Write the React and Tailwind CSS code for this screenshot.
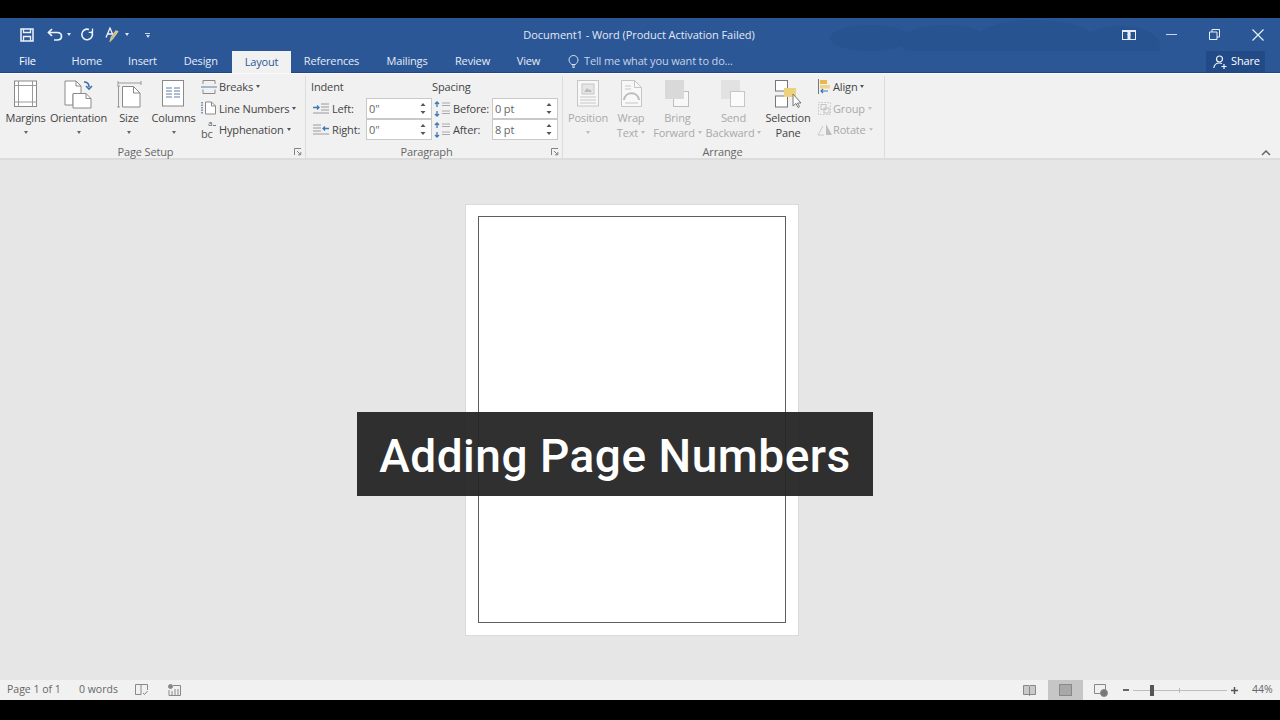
const tabs = [
  ["Home", "w-[57.5px]"],
  ["Insert", "w-[54px]"],
  ["Design", "w-[62.5px]"],
];
const tabs2 = [
  ["References", "w-[81px]"],
  ["Mailings", "w-[70px]"],
  ["Review", "w-[61px]"],
  ["View", "w-[51px]"],
];

function Caret({ className = "" }) {
  return <span className={"inline-block w-0 h-0 border-l-[2.5px] border-r-[2.5px] border-t-[3px] border-l-transparent border-r-transparent border-t-current " + className} />;
}

function Launcher() {
  return (
    <svg width="8" height="8" viewBox="0 0 8 8" className="absolute right-[3px] bottom-[2px]" fill="none" stroke="#777" strokeWidth="0.9">
      <path d="M7 .5H.5V7" />
      <path d="M3 3l3.5 3.5M6.8 4v2.8H4" />
    </svg>
  );
}

function Big({ w, icon, l1, l2, caret, muted }) {
  return (
    <div className={"flex flex-col items-center shrink-0 pt-[4px] " + w + (muted ? " text-[#a9a9a9]" : " text-[#444]")}>
      <div className="h-[30px] flex items-start justify-center">{icon}</div>
      <div className="leading-[15px] whitespace-nowrap h-[15px]">{l1}</div>
      {l2 ? (
        <div className="leading-[15px] whitespace-nowrap flex items-center gap-[3px] justify-center">
          {l2}
          {caret && <Caret className="text-[#bbb]" />}
        </div>
      ) : (
        <div className="h-[14px] flex items-center justify-center"><Caret className={muted ? "text-[#bbb]" : "text-[#666]"} /></div>
      )}
    </div>
  );
}

function Small({ icon, label, muted, iw = "w-[18px]" }) {
  return (
    <div className={"h-[21.5px] flex items-center whitespace-nowrap " + (muted ? "text-[#a9a9a9]" : "text-[#444]")}>
      <span className={"flex justify-start shrink-0 " + iw}>{icon}</span>
      <span>{label}</span>
      <Caret className={"ml-[3px] " + (muted ? "text-[#c4c4c4]" : "text-[#555]")} />
    </div>
  );
}

function Spinner({ value }) {
  return (
    <div className="w-[66px] h-[21px] bg-white border border-[#c9c9c9] flex items-center justify-between pl-[2px] pr-[5px] text-[#666]">
      <span>{value}</span>
      <svg width="6" height="13" viewBox="0 0 6 13" fill="#555">
        <path d="M3 1l2.5 3H.5zM3 12L.5 9h5z" />
      </svg>
    </div>
  );
}

const S = { stroke: "#8a8a8a", strokeWidth: 1, fill: "none" };

const IconMargins = (
  <svg width="24" height="28" viewBox="0 0 24 28" {...S}>
    <rect x=".5" y="1" width="22" height="25.5" fill="#fff" />
    <path d="M4.5 1v25.5M18.5 1v25.5M.5 5.5h22M.5 22h22" stroke="#9a9a9a" />
  </svg>
);
const IconOrientation = (
  <svg width="30" height="30" viewBox="0 0 30 30" {...S}>
    <path d="M1 1h11l5 5v8H9v11H1z" fill="#fff" />
    <path d="M12 1v5h5" />
    <path d="M9 13.500h13l5 5V28H9z" fill="#fff" />
    <path d="M22 13.500v5h5" />
    <path d="M20 2c3 0 5 1 5 5" stroke="#3f6ea8" strokeWidth="1.6" />
    <path d="M22 6l3 3 3-3" stroke="#3f6ea8" strokeWidth="1.6" />
  </svg>
);
const IconSize = (
  <svg width="25" height="29" viewBox="0 0 25 29" {...S}>
    <path d="M1 3h23M1 1v4M24 1v4M1.500 6v21M0 6h3M0 27h3" stroke="#999" />
    <path d="M5.500 6.500h11l6.500 6.500v14H5.500z" fill="#fff" />
    <path d="M16.500 6.500V13H23" />
  </svg>
);
const IconColumns = (
  <svg width="23" height="27" viewBox="0 0 23 27" {...S}>
    <rect x=".5" y=".5" width="21" height="25.500" fill="#fff" />
    <path d="M4 8h6M12 8h6M4 11h6M12 11h6M4 14h6M12 14h6M4 17h6M12 17h6" stroke="#5d7ea8" />
  </svg>
);
const IconBreaks = (
  <svg width="16" height="14" viewBox="0 0 16 14" {...S}>
    <path d="M2 .5h12M2 .5v3.500M14 .5v3.500M2 13.500v-4M14 13.500v-4M2 13.500h12" />
    <path d="M0 7h16" stroke="#5d7ea8" />
  </svg>
);
const IconLines = (
  <svg width="16" height="14" viewBox="0 0 16 14" {...S}>
    <path d="M1 1v12" stroke="#5d7ea8" strokeDasharray="1.500 1" strokeWidth="1.500" />
    <path d="M4.500 1h6l4 4v8h-10z" fill="#fff" />
    <path d="M10.500 1v4h4" />
  </svg>
);
const IconHyphen = (
  <span className="relative block w-[16px] h-[14px] text-[#555] leading-none">
    <span className="absolute left-0 bottom-[-2px] text-[11px]">bc</span>
    <span className="absolute left-[7px] top-[-4px] text-[8px]">a</span>
    <span className="absolute left-[12px] top-[2px] block w-[3px] h-[1px] bg-[#5d7ea8]" />
  </span>
);
const IconIndentL = (
  <svg width="16" height="11" viewBox="0 0 16 11" fill="none" strokeWidth="1">
    <path d="M8 1h8M8 4h8M8 7h8M0 10h16" stroke="#9a9a9a" />
    <path d="M0 4.500h6M4 2.500l2 2-2 2" stroke="#3b78b8" strokeWidth="1.300" />
  </svg>
);
const IconIndentR = (
  <svg width="16" height="11" viewBox="0 0 16 11" fill="none" strokeWidth="1">
    <path d="M0 1h8M0 4h8M0 7h8M0 10h16" stroke="#9a9a9a" />
    <path d="M16 4.500h-6M12 2.500l-2 2 2 2" stroke="#3b78b8" strokeWidth="1.300" />
  </svg>
);
const IconBefore = (
  <svg width="16" height="16" viewBox="0 0 16 16" fill="none" strokeWidth="1">
    <path d="M3 6V1M1 3l2-2 2 2M3 10v5M1 13l2 2 2-2" stroke="#3b78b8" strokeWidth="1.300" />
    <path d="M8 2h8M8 4.500h8M8 10h8M8 12.500h8" stroke="#aaa" />
  </svg>
);
const IconPosition = (
  <svg width="23" height="27" viewBox="0 0 23 27" fill="none" stroke="#c6c6c6">
    <rect x=".5" y=".5" width="21" height="25.500" fill="#f8f8f8" />
    <rect x="5" y="4" width="12" height="10" fill="#e6e6e6" />
    <path d="M7 12l3-4 2 2 1-1 2 3z" fill="#bdbdbd" stroke="none" />
    <path d="M3 17h16M3 20h16M3 23h16" />
  </svg>
);
const IconWrap = (
  <svg width="21" height="27" viewBox="0 0 21 27" fill="none" stroke="#c6c6c6">
    <path d="M.5.500h13l7 7V26.500H.5z" fill="#f8f8f8" />
    <path d="M13.500.500v7h7M4 6h6M4 9h6" />
    <path d="M3 20c1-9 14-9 15 0" stroke="#bbb" strokeWidth="2" />
    <path d="M4 23h13" />
  </svg>
);
const IconBring = (
  <svg width="25" height="27" viewBox="0 0 25 27" fill="none">
    <rect x="8.500" y="11.500" width="15" height="15" fill="#f8f8f8" stroke="#bdbdbd" />
    <rect x="0" y="0" width="19" height="19" fill="#d9d9d9" />
  </svg>
);
const IconSend = (
  <svg width="25" height="27" viewBox="0 0 25 27" fill="none">
    <rect x="0" y="0" width="19" height="19" fill="#e2e2e2" />
    <rect x="9.500" y="11.500" width="14" height="15" fill="#fbfbfb" stroke="#c6c6c6" />
  </svg>
);
const IconSelection = (
  <svg width="27" height="29" viewBox="0 0 27 29" fill="none">
    <rect x=".5" y=".5" width="12" height="10.500" fill="#fff" stroke="#777" />
    <rect x=".5" y="16" width="12" height="11" fill="#fff" stroke="#777" />
    <rect x="9" y="8" width="12" height="9" fill="#ecd27c" />
    <path d="M18 14v12l3-2.500 2 4 1.500-.8-2-3.700h3.500z" fill="#fff" stroke="#777" />
  </svg>
);
const IconAlign = (
  <svg width="15" height="15" viewBox="0 0 15 15" fill="none">
    <path d="M1.500 0v15" stroke="#777" />
    <rect x="3" y="1" width="7" height="4" fill="#e7b84f" />
    <rect x="3" y="6" width="10" height="3.500" fill="#f0d48a" />
    <path d="M11 12H4M6 10l-2 2 2 2" stroke="#3b78b8" strokeWidth="1.200" />
  </svg>
);
const IconGroup = (
  <svg width="15" height="15" viewBox="0 0 15 15" fill="none" stroke="#c4c4c4">
    <rect x="1.500" y="1.500" width="12" height="12" strokeDasharray="1.500 1.500" />
    <rect x="4" y="3.500" width="5" height="5" />
    <rect x="7" y="7" width="5" height="5" />
  </svg>
);
const IconRotate = (
  <svg width="15" height="13" viewBox="0 0 15 13" fill="none">
    <path d="M9 1l6 11H9z" fill="#bdbdbd" />
    <path d="M7 12H1l5-9" stroke="#c9c9c9" />
  </svg>
);

function Group({ w, label, launcher, children, pad = "pr-0" }) {
  return (
    <div className={"relative h-full shrink-0 border-r border-[#dcdcdc] flex flex-col " + w}>
      <div className="flex-1 flex min-h-0">{children}</div>
      <div className={"h-[15px] -mb-[1px] flex items-center justify-center text-[#666] leading-none " + pad}>{label}</div>
      {launcher && <Launcher />}
    </div>
  );
}

export default function App() {
  return (
    <div className="w-[1280px] h-[720px] overflow-hidden bg-black relative text-[11px] font-['Open_Sans','Noto_Sans',sans-serif] tracking-[-0.15px]">
      <div className="h-[18px] bg-black" />

      {/* Title bar */}
      <div className="relative h-[33px] bg-[#2b5797] flex items-center pl-[20px]">
        <svg className="absolute left-[820px] top-0" width="360" height="55" viewBox="0 0 360 55" fill="#204a85" opacity="0.3">
          <ellipse cx="50" cy="20" rx="40" ry="13" />
          <ellipse cx="125" cy="24" rx="45" ry="17" />
          <ellipse cx="215" cy="22" rx="60" ry="20" />
          <ellipse cx="300" cy="28" rx="40" ry="20" />
        </svg>
        <div className="relative flex items-center text-white">
          <svg width="14" height="14" viewBox="0 0 14 14" fill="none" stroke="#eef3fa" strokeWidth="1.500" className="mr-[13px]">
            <path d="M1 1h12v12H1z" />
            <path d="M3.500 1v3.500h7V1M3.500 13V8.500h7V13" strokeWidth="1.300" />
          </svg>
          <svg width="16" height="13" viewBox="0 0 16 13" fill="none" stroke="#eef3fa" strokeWidth="1.700">
            <path d="M1.500 4.500H10c3 0 4.500 1.700 4.500 3.700S13 12 10 12H7" />
            <path d="M5 1L1.500 4.500 5 8" />
          </svg>
          <Caret className="ml-[4px] text-[#dfe7f2]" />
          <svg width="14" height="14" viewBox="0 0 14 14" fill="none" stroke="#eef3fa" strokeWidth="1.600" className="ml-[10px]">
            <path d="M10.500 3.500a5.300 5.300 0 1 1-2.500-2" />
            <path d="M11.500.500v3.800H7.700" strokeWidth="1.300" />
          </svg>
          <span className="relative ml-[10px] w-[15px] h-[15px] block">
            <svg width="15" height="15" viewBox="0 0 15 15" fill="none" stroke="#eef3fa" strokeWidth="1.300">
              <path d="M1 10.500L5 1l3 7M2.500 7h5" />
              <path d="M13 4l-5 7-2.500 2.500 1-3.500 5-6.500" strokeWidth="1.500" stroke="#d8c98b" />
            </svg>
          </span>
          <Caret className="ml-[5px] text-[#dfe7f2]" />
          <span className="ml-[16px] flex flex-col items-center gap-[1px] mt-[1px]">
            <span className="block w-[5px] h-[1px] bg-[#cfdbeb]" />
            <Caret className="text-[#cfdbeb]" />
          </span>
        </div>
        <div className="absolute left-[524px] top-[9px] w-[230px] flex justify-center whitespace-nowrap text-[#e3e9f3] leading-[15px] tracking-[-0.05px]">
          Document1 - Word (Product Activation Failed)
        </div>
        <div className="relative ml-auto flex items-center pr-[16px]">
          <svg width="14" height="10" viewBox="0 0 14 10" fill="#e8eef7" className="mr-[30px]">
            <path d="M0 0h14v10H0zm1 2v7h4.500V2zm7.500 0v7H13V2z" fillRule="evenodd" />
            <path d="M7 2.500l2 2.300H7.800V8H6.200V4.800H5z" />
          </svg>
          <span className="block w-[11px] h-[1px] bg-[#cbd7e8] mr-[32px]" />
          <svg width="11" height="11" viewBox="0 0 11 11" fill="none" stroke="#e8eef7" className="mr-[32px]">
            <path d="M.5 3h7.500v7.500H.5z" />
            <path d="M3 3V.5h7.500V8H8" />
          </svg>
          <svg width="12" height="12" viewBox="0 0 12 12" stroke="#eef3fa" strokeWidth="1.100">
            <path d="M.5.500l11 11M11.500.500l-11 11" />
          </svg>
        </div>
      </div>

      {/* Tabs */}
      <div className="relative h-[22px] bg-[#2b5797] border-b border-[#1f4785] flex items-stretch text-[#e6ecf5]">
        <div className="w-[58px] flex items-center justify-start pl-[19px] text-white">File</div>
        {tabs.map(([t, w]) => (
          <div key={t} className={"flex items-center justify-center " + w}>{t}</div>
        ))}
        <div className="w-[59px] h-[22px] bg-[#f1f1f1] text-[#2b5797] flex items-center justify-center">Layout</div>
        {tabs2.map(([t, w]) => (
          <div key={t} className={"flex items-center justify-center " + w}>{t}</div>
        ))}
        <div className="flex items-center pl-[14px] text-[#c6d3e6]">
          <svg width="11" height="13" viewBox="0 0 11 13" fill="none" stroke="#d9e3f0" className="mr-[5px]">
            <path d="M3.500 9.500C2.500 8 1 7 1 5a4.500 4.500 0 0 1 9 0c0 2-1.500 3-2.500 4.500zM4 11h3M4.500 12.500h2" />
          </svg>
          Tell me what you want to do...
        </div>
        <div className="absolute left-[1206px] top-0 w-[59px] h-[21px] bg-[#214a86] flex items-center pl-[7px] text-white">
          <svg width="14" height="14" viewBox="0 0 14 14" fill="none" stroke="#f2f5fa" strokeWidth="1.200" className="mr-[4px]">
            <circle cx="6.500" cy="4" r="3" />
            <path d="M.8 13c.4-3 2.500-5 5.700-5 1 0 1.800.2 2.500.6M11 9v5M8.500 11.500h5" />
          </svg>
          Share
        </div>
      </div>

      {/* Ribbon */}
      <div className="relative h-[87px] bg-[#f1f1f1] border-t border-[#fafafa] border-b-2 border-b-[#dcdcdc] flex pt-[2px] leading-none">
        <Group w="w-[306px]" label="Page Setup" launcher pad="pr-[14px]">
          <Big w="w-[51px]" icon={IconMargins} l1="Margins" />
          <Big w="w-[55px]" icon={IconOrientation} l1="Orientation" />
          <Big w="w-[46px]" icon={IconSize} l1="Size" />
          <Big w="w-[43px]" icon={IconColumns} l1="Columns" />
          <div className="pl-[6px]">
            <Small icon={IconBreaks} label="Breaks" />
            <Small icon={IconLines} label="Line Numbers" />
            <Small icon={IconHyphen} label="Hyphenation" />
          </div>
        </Group>

        <Group w="w-[257px]" label="Paragraph" launcher pad="pr-[15px]">
          <div className="pl-[5px] flex">
            <div className="w-[121px] shrink-0 text-[#444]">
              <div className="h-[22px] flex items-center pb-[1px]">Indent</div>
              <div className="flex items-center h-[21px]">
                <span className="ml-[2px] w-[19px]">{IconIndentL}</span>
                <span className="w-[34px]">Left:</span>
                <Spinner value={'0"'} />
              </div>
              <div className="flex items-center h-[21px]">
                <span className="ml-[2px] w-[19px]">{IconIndentR}</span>
                <span className="w-[34px]">Right:</span>
                <Spinner value={'0"'} />
              </div>
            </div>
            <div className="shrink-0 text-[#444]">
              <div className="h-[22px] flex items-center pb-[1px]">Spacing</div>
              <div className="flex items-center h-[21px]">
                <span className="ml-[2px] w-[19px]">{IconBefore}</span>
                <span className="w-[39px]">Before:</span>
                <Spinner value="0 pt" />
              </div>
              <div className="flex items-center h-[21px]">
                <span className="ml-[2px] w-[19px]">{IconBefore}</span>
                <span className="w-[39px]">After:</span>
                <Spinner value="8 pt" />
              </div>
            </div>
          </div>
        </Group>

        <Group w="w-[322px]" label="Arrange" pad="pr-[2px]">
          <div className="w-[3px]" />
          <Big w="w-[44px]" muted icon={IconPosition} l1="Position" />
          <Big w="w-[42px]" muted icon={IconWrap} l1="Wrap" l2="Text" caret />
          <Big w="w-[51px]" muted icon={IconBring} l1="Bring" l2="Forward" caret />
          <Big w="w-[61px]" muted icon={IconSend} l1="Send" l2="Backward" caret />
          <Big w="w-[48px]" icon={IconSelection} l1="Selection" l2="Pane" />
          <div className="pl-[5px]">
            <Small iw="w-[16px]" icon={IconAlign} label="Align" />
            <Small iw="w-[16px]" icon={IconGroup} label="Group" muted />
            <Small iw="w-[16px]" icon={IconRotate} label="Rotate" muted />
          </div>
        </Group>

        <svg width="10" height="6" viewBox="0 0 10 6" fill="none" stroke="#666" strokeWidth="1.500" className="absolute left-[1261px] top-[76px]">
          <path d="M1 5l4-4 4 4" />
        </svg>
      </div>

      {/* Document area */}
      <div className="h-[520px] bg-[#e6e6e6] flex items-center justify-center pr-[16px]">
        <div className="w-[334px] h-[432px] bg-white border border-[#dadada] pt-[11px] pl-[12px]">
          <div className="w-[308px] h-[407px] border-[1.500px] border-[#5e5e5e]" />
        </div>
      </div>

      {/* Status bar */}
      <div className="h-[20px] bg-[#f1f1f1] flex items-center text-[#666] relative text-[10.5px] tracking-normal">
        <span className="ml-[7px] w-[72px]">Page 1 of 1</span>
        <span className="w-[56px]">0 words</span>
        <svg width="13" height="12" viewBox="0 0 13 12" fill="none" stroke="#888" className="mr-[20px]">
          <path d="M.5.500h5.500v10H.5zM6 .500h6.500V6M8 9l1.500 1.500L12.500 7" />
        </svg>
        <svg width="13" height="12" viewBox="0 0 13 12" fill="none" stroke="#888">
          <circle cx="2.500" cy="2.500" r="2" fill="#888" />
          <path d="M5 1.500h7.500V11.500H1V6M4 7v4M7 5v6M10 5v6" />
        </svg>
        <div className="ml-auto flex items-center h-full">
          <svg width="13" height="12" viewBox="0 0 13 12" fill="#c9c9c9" stroke="#888" className="mr-[12px]">
            <path d="M.5 1.500h5.500l.5 1 .5-1h5.500v9h-5.500l-.5 1-.5-1H.5zM6.500 2.500v9" />
          </svg>
          <div className="w-[35px] h-full bg-[#c6c6c6] flex items-center justify-center">
            <span className="block w-[13px] h-[12px] bg-[#a8a8a8] border border-[#888]" />
          </div>
          <svg width="14" height="13" viewBox="0 0 14 13" fill="none" stroke="#888" className="ml-[11px] mr-[15px]">
            <path d="M6 9.500H.5V.500h11V6" />
            <circle cx="10" cy="9" r="3.500" fill="#777" />
          </svg>
          <span className="block w-[6px] h-[1.500px] bg-[#666] mr-[2px]" />
          <div className="relative w-[94px] h-[1px] bg-[#bdbdbd] ml-[2px]">
            <span className="absolute left-[17px] top-[-5px] block w-[4px] h-[11px] bg-[#555]" />
            <span className="absolute left-[46px] top-[-2px] block w-[1px] h-[5px] bg-[#bbb]" />
          </div>
          <svg width="7" height="7" viewBox="0 0 7 7" stroke="#555" strokeWidth="1.500" className="ml-[4px]">
            <path d="M3.500 0v7M0 3.500h7" />
          </svg>
          <span className="ml-[14px] w-[28px]">44%</span>
        </div>
      </div>

      {/* Caption over the page */}
      <div className="absolute left-[357px] top-[412px] w-[516px] h-[84px] bg-[#252525]/95 flex items-center justify-center pt-[4px] text-white font-['Roboto',sans-serif] text-[46px] font-medium tracking-[0.5px] whitespace-nowrap leading-none">
        Adding Page Numbers
      </div>
    </div>
  );
}
